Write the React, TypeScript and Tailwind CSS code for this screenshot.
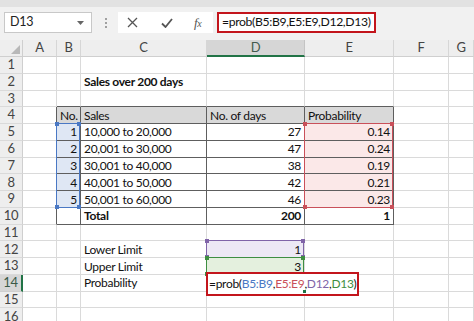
import React from 'react'

type Cell = { v: React.ReactNode; right?: boolean; bold?: boolean }

const LETTERS = ['A', 'B', 'C', 'D', 'E', 'F', 'G']

const data: Record<string, Cell> = {
  C2: { v: 'Sales over 200 days', bold: true },
  B4: { v: 'No.' },
  C4: { v: 'Sales' },
  D4: { v: 'No. of days' },
  E4: { v: 'Probability' },
  B5: { v: '1', right: true },
  C5: { v: '10,000 to 20,000' },
  D5: { v: '27', right: true },
  E5: { v: '0.14', right: true },
  B6: { v: '2', right: true },
  C6: { v: '20,001 to 30,000' },
  D6: { v: '47', right: true },
  E6: { v: '0.24', right: true },
  B7: { v: '3', right: true },
  C7: { v: '30,001 to 40,000' },
  D7: { v: '38', right: true },
  E7: { v: '0.19', right: true },
  B8: { v: '4', right: true },
  C8: { v: '40,001 to 50,000' },
  D8: { v: '42', right: true },
  E8: { v: '0.21', right: true },
  B9: { v: '5', right: true },
  C9: { v: '50,001 to 60,000' },
  D9: { v: '46', right: true },
  E9: { v: '0.23', right: true },
  C10: { v: 'Total', bold: true },
  D10: { v: '200', right: true, bold: true },
  E10: { v: '1', right: true, bold: true },
  C12: { v: 'Lower Limit' },
  D12: { v: '1', right: true },
  C13: { v: 'Upper Limit' },
  D13: { v: '3', right: true },
  C14: { v: 'Probability' },
}

// range outline like excel's colored reference boxes
const Corners = ({ color }: { color: string }) => (
  <>
    <span className={`absolute -left-[2px] -top-[2px] w-[4px] h-[4px] ${color}`} />
    <span className={`absolute -right-[2px] -top-[2px] w-[4px] h-[4px] ${color}`} />
    <span className={`absolute -left-[2px] -bottom-[2px] w-[4px] h-[4px] ${color}`} />
    <span className={`absolute -right-[2px] -bottom-[2px] w-[4px] h-[4px] ${color}`} />
  </>
)

const overlays: Record<string, React.ReactNode> = {
  B5: (
    <div className="absolute left-[-1px] top-[-1px] w-[calc(100%+1px)] h-[85px] border-[1.5px] border-[#4a78c4] z-10 pointer-events-none">
      <Corners color="bg-[#4a78c4]" />
    </div>
  ),
  E5: (
    <div className="absolute left-[-1px] top-[-1px] w-[calc(100%+1px)] h-[85px] border-[1.5px] border-[#c9505a] z-10 pointer-events-none">
      <Corners color="bg-[#c9505a]" />
    </div>
  ),
  D12: (
    <div className="absolute left-[-1px] top-[-1px] w-[calc(100%+1px)] h-[18px] border-[1.5px] border-[#8064a8] z-10 pointer-events-none">
      <Corners color="bg-[#8064a8]" />
    </div>
  ),
  D13: (
    <div className="absolute left-[-1px] top-[-1px] w-[calc(100%+1px)] h-[18px] border-[1.5px] border-[#3e8e41] z-10 pointer-events-none">
      <Corners color="bg-[#3e8e41]" />
    </div>
  ),
  D14: (
    <>
      <div className="absolute left-[-1px] top-[-3px] w-[153px] h-[24px] border-[2.5px] border-[#c3151c] bg-white z-20 flex items-center pl-[1px] whitespace-nowrap">
        <span>=prob(</span>
        <span className="text-[#4a78c4]">B5:B9</span>
        <span>,</span>
        <span className="text-[#c9505a]">E5:E9</span>
        <span>,</span>
        <span className="text-[#8064a8]">D12</span>
        <span>,</span>
        <span className="text-[#3e8e41]">D13</span>
        <span>)</span>
        <span className="w-px h-[13px] bg-black ml-px" />
      </div>
      <span className="absolute right-[-2px] bottom-[-2px] w-[3px] h-[3px] bg-[#217346] z-30" />
    </>
  ),
}

function cellBg(r: number, c: number) {
  if (r === 4 && c >= 2 && c <= 5) return 'bg-[#d9d9d9]'
  if (c === 2 && r >= 5 && r <= 9) return 'bg-[#dfe7f4]'
  if (c === 5 && r >= 5 && r <= 9) return 'bg-[#fbe8e8]'
  if (c === 4 && r === 12) return 'bg-[#ede8f5]'
  if (c === 4 && r === 13) return 'bg-[#e4f0de]'
  return ''
}

const FormulaBar = () => (
  <div className="h-[40px] bg-[#f1f1f1] flex flex-col">
    <div className="h-[7px] bg-[#e2e2e2]" />
    <div className="flex items-start pt-[5px] pl-[4px]">
      <div className="w-[88px] h-[21px] bg-white border border-[#c8c8c8] flex items-center justify-between pl-[5px] pr-[7px] text-[12.5px] text-[#222]">
        <span>D13</span>
        <svg width="7" height="4" viewBox="0 0 7 4">
          <path d="M0 0h7L3.5 4z" fill="#666" />
        </svg>
      </div>
      <div className="ml-[13px] h-[21px] flex flex-col justify-center gap-[2px]">
        <span className="w-[2px] h-[2px] bg-[#a0a0a0]" />
        <span className="w-[2px] h-[2px] bg-[#a0a0a0]" />
        <span className="w-[2px] h-[2px] bg-[#a0a0a0]" />
      </div>
      <div className="ml-[11px] w-[95px] h-[21px] bg-white flex items-center">
        <svg className="ml-[9px]" width="11" height="11" viewBox="0 0 11 11">
          <path d="M1 1l9 9M10 1l-9 9" stroke="#555" strokeWidth="1.3" fill="none" />
        </svg>
        <svg className="ml-[23px]" width="12" height="10" viewBox="0 0 12 10">
          <path d="M1 5.5l3.5 3.5L11 1" stroke="#555" strokeWidth="1.8" fill="none" />
        </svg>
        <span className="ml-[21px] font-['Liberation_Serif',serif] italic text-[13px] text-[#555] leading-none">
          f<span className="text-[10px]">x</span>
        </span>
      </div>
      <div className="ml-[4px] w-[159px] h-[21px] bg-white border-2 border-[#c3151c] flex items-center pl-[3px] text-[12.2px] tracking-[-0.35px] text-[#111] whitespace-nowrap overflow-hidden">
        =prob(B5:B9,E5:E9,D12,D13)
      </div>
    </div>
  </div>
)

const Sheet = () => {
  const rows = Array.from({ length: 16 }, (_, i) => i + 1)
  return (
    <div className="grid grid-cols-[23px_34px_24px_126px_98px_89px_55px_1fr] grid-rows-[17px] auto-rows-[16.77px]">
      {/* column headers */}
      <div className="relative bg-[#eeeeee] border-r border-b border-[#cfcfcf]">
        <svg className="absolute right-[2px] bottom-[2px]" width="9" height="9" viewBox="0 0 9 9">
          <path d="M9 0v9H0z" fill="#b8b8b8" />
        </svg>
      </div>
      {LETTERS.map((l) =>
        l === 'D' ? (
          <div key={l} className="bg-[#d6d6d6] border-r border-[#c4c4c4] border-b-2 border-b-[#217346] flex items-center justify-center text-[13px] text-[#445a4e]">
            {l}
          </div>
        ) : (
          <div key={l} className="bg-[#eeeeee] border-r border-b border-[#d6d6d6] border-b-[#cfcfcf] flex items-center justify-center text-[13px] text-[#444]">
            {l}
          </div>
        )
      )}

      {rows.map((r) => (
        <React.Fragment key={r}>
          {r === 14 ? (
            <div className="bg-[#d6d6d6] border-r-2 border-r-[#217346] border-b border-b-[#cfcfcf] flex items-center justify-center text-[13px] text-[#3a5a48]">
              {r}
            </div>
          ) : (
            <div className="bg-[#eeeeee] border-r border-b border-r-[#cfcfcf] border-b-[#dadada] flex items-center justify-center text-[13px] text-[#444]">
              {r}
            </div>
          )}
          {LETTERS.map((l, i) => {
            const c = i + 1
            const key = `${l}${r}`
            const cell = data[key]
            const darkB = r >= 3 && r <= 10 && c >= 2 && c <= 5
            const darkR = r >= 4 && r <= 10 && c >= 1 && c <= 5
            return (
              <div
                key={key}
                className={`relative border-r border-b flex items-center px-[3px] pt-[1px] whitespace-nowrap ${
                  darkR ? 'border-r-[#5e5e5e]' : 'border-r-[#dadada]'
                } ${darkB ? 'border-b-[#5e5e5e]' : 'border-b-[#dadada]'} ${cellBg(r, c)} ${
                  cell?.right ? 'justify-end' : ''
                } ${cell?.bold ? 'font-bold' : ''}`}
              >
                {cell?.v}
                {overlays[key]}
              </div>
            )
          })}
        </React.Fragment>
      ))}
    </div>
  )
}

export default function App() {
  return (
    <div className="w-[474px] h-[321px] overflow-hidden bg-white font-[Lato,sans-serif] text-[12px] tracking-[-0.3px] text-[#111]">
      <FormulaBar />
      <Sheet />
    </div>
  )
}
